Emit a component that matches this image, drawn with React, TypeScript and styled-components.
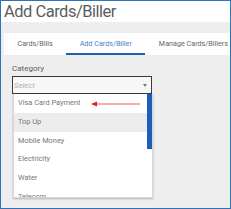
import React from 'react'
import styled, { createGlobalStyle } from 'styled-components'

const GlobalStyle = createGlobalStyle`
  body {
    margin: 0;
    font-family: Roboto, "Liberation Sans", sans-serif;
  }
`

const Frame = styled.div`
  width: 231px;
  height: 209px;
  box-sizing: border-box;
  border: 1px solid #2e72b8;
  background: #eeeeee;
  overflow: hidden;
  display: flex;
  flex-direction: column;
`

const Header = styled.div`
  height: 21px;
  background: #fff;
  padding-left: 3px;
  font-size: 16.5px;
  letter-spacing: -0.5px;
  line-height: 21px;
  color: #5c5c5c;
  flex-shrink: 0;
  white-space: nowrap;
`

const TabBar = styled.div`
  margin: 11px 0 0 3px;
  height: 22px;
  background: #fff;
  display: flex;
  flex-shrink: 0;
  overflow: hidden;
`

const Tab = styled.div<{ active?: boolean }>`
  padding: 0 13.5px;
  font-size: 7.2px;
  line-height: 21px;
  white-space: nowrap;
  color: ${({ active }) => (active ? '#4a82cc' : '#666')};
  border-bottom: 2px solid ${({ active }) => (active ? '#1d5fbf' : 'transparent')};
  height: 20px;
`

const Body = styled.div`
  padding: 9px 0 0 11px;
  position: relative;
`

const Label = styled.div`
  font-size: 8px;
  color: #606060;
  line-height: 10px;
  margin-bottom: 2px;
`

const SelectBox = styled.div`
  width: 140px;
  height: 18px;
  box-sizing: border-box;
  border: 1px solid #3a3a3a;
  background: #f7f7f7;
  display: flex;
  align-items: center;
  justify-content: space-between;
  padding: 0 4px 0 1px;
`

const Placeholder = styled.span`
  font-style: italic;
  font-size: 7.8px;
  color: #b0b0b0;
`

const Caret = styled.span`
  width: 0;
  height: 0;
  border-left: 2.5px solid transparent;
  border-right: 2.5px solid transparent;
  border-top: 3px solid #777;
`

const Dropdown = styled.div`
  width: 140px;
  height: 104px;
  margin-left: 1px;
  background: #fff;
  box-shadow: 0 1px 2px rgba(0, 0, 0, 0.25);
  border: 1px solid #d8d8d8;
  border-top: none;
  box-sizing: border-box;
  display: flex;
  overflow: hidden;
`

const List = styled.div`
  flex: 1;
  display: flex;
  flex-direction: column;
`

const Item = styled.div<{ hover?: boolean }>`
  height: 18.8px;
  flex-shrink: 0;
  padding-left: 4px;
  font-size: 7.4px;
  line-height: 18.8px;
  color: #777;
  background: ${({ hover }) => (hover ? '#ececec' : '#fff')};
`

const Track = styled.div`
  width: 5px;
  background: #fff;
`

const Thumb = styled.div`
  height: 55px;
  background: #1a5fbe;
`

const Arrow = styled.svg`
  position: absolute;
  left: 90px;
  top: 46px;
`

const items = ['Visa Card Payment', 'Top Up', 'Mobile Money', 'Electricity', 'Water', 'Telecom']

export default function App() {
  return (
    <>
      <GlobalStyle />
      <Frame>
        <Header>Add Cards/Biller</Header>
        <TabBar>
          <Tab>Cards/Bills</Tab>
          <Tab active>Add Cards/Biller</Tab>
          <Tab>Manage Cards/Billers</Tab>
        </TabBar>
        <Body>
          <Label>Category</Label>
          <SelectBox>
            <Placeholder>Select</Placeholder>
            <Caret />
          </SelectBox>
          <Dropdown>
            <List>
              {items.map((it, i) => (
                <Item key={it} hover={i === 1}>
                  {it}
                </Item>
              ))}
            </List>
            <Track>
              <Thumb />
            </Track>
          </Dropdown>
          <Arrow width="50" height="6" viewBox="0 0 50 6">
            <line x1="4" y1="3" x2="49" y2="3" stroke="#ef5a5f" strokeWidth="1.2" />
            <polygon points="0,3 6,0.5 6,5.5" fill="#e02020" />
          </Arrow>
        </Body>
      </Frame>
    </>
  )
}
